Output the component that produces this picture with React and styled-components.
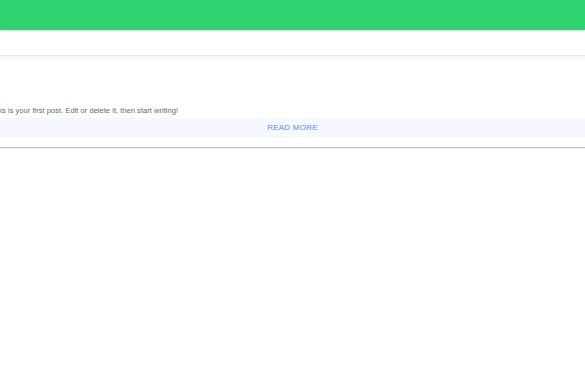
import React from 'react';
import styled, { createGlobalStyle } from 'styled-components';

const GlobalStyle = createGlobalStyle`
  html, body {
    margin: 0;
    padding: 0;
    background: #ffffff;
    font-family: 'Liberation Sans', Arial, sans-serif;
    overflow: hidden;
  }
`;

const Page = styled.div`
  width: 585px;
  height: 390px;
  overflow: hidden;
  display: flex;
  flex-direction: column;
`;

const Header = styled.header`
  height: 30px;
  flex-shrink: 0;
  background: #2fd372;
  box-shadow: 0 1px 2px rgba(0, 0, 0, 0.18);
  position: relative;
  z-index: 1;
`;

const SubBar = styled.div`
  height: 25px;
  flex-shrink: 0;
  background: #ffffff;
  border-bottom: 1px solid #e6e6e6;
`;

const Gap = styled.div`
  height: 4px;
  flex-shrink: 0;
  background: #f8f8f8;
`;

const Card = styled.article`
  display: flex;
  flex-direction: column;
  background: #ffffff;
  border-bottom: 1px solid #c4c4c4;
  box-shadow: 0 1px 1px rgba(0, 0, 0, 0.06);
`;

const CardBody = styled.div`
  height: 56px;
  display: flex;
  align-items: flex-end;
  margin-left: -8.5px;
  padding-bottom: 2px;
`;

const Excerpt = styled.p`
  margin: 0;
  font-size: 7.6px;
  line-height: 10px;
  color: #6a6a6a;
  white-space: nowrap;
`;

const Footer = styled.div`
  height: 19px;
  background: #f5f8fe;
  display: flex;
  align-items: center;
  justify-content: center;
  margin-bottom: 10px;
`;

const ReadMore = styled.a`
  font-size: 8px;
  letter-spacing: 0.25px;
  color: #5b8def;
  text-decoration: none;
  text-transform: uppercase;
`;

export default function App() {
  return (
    <Page>
      <GlobalStyle />
      <Header />
      <SubBar />
      <Gap />
      <Card>
        <CardBody>
          <Excerpt>This is your first post. Edit or delete it, then start writing!</Excerpt>
        </CardBody>
        <Footer>
          <ReadMore href="#">Read more</ReadMore>
        </Footer>
      </Card>
    </Page>
  );
}
